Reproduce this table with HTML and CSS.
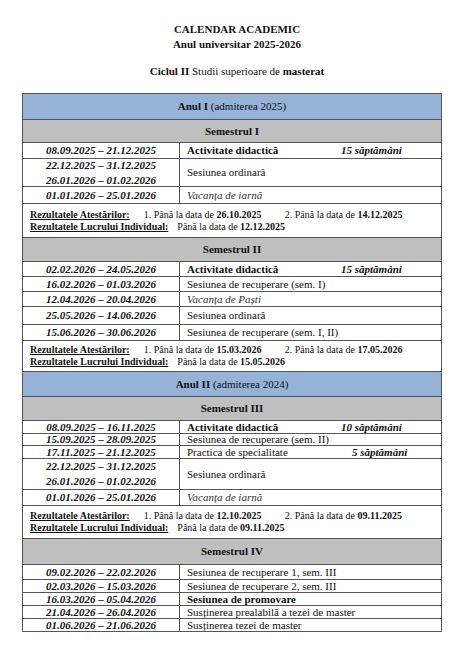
FILE: index.html
```html
<!DOCTYPE html>
<html lang="ro">
<head>
<meta charset="utf-8">
<title>Calendar academic</title>
<link rel="stylesheet" href="styles.css">
</head>
<body>
<div class="page">
  <header class="head">
    <div class="title">CALENDAR ACADEMIC</div>
    <div class="title">Anul universitar 2025-2026</div>
    <div class="cycle"><b>Ciclul II</b> Studii superioare de <b>masterat</b></div>
  </header>

  <table class="cal">
    <colgroup><col class="c1"><col class="c2"></colgroup>
    <tbody>
      <tr class="year h26"><td colspan="2"><b>Anul I</b> (admiterea 2025)</td></tr>
      <tr class="sem h23"><td colspan="2">Semestrul I</td></tr>
      <tr class="h16"><td class="d">08.09.2025 – 21.12.2025</td><td class="t"><div class="wk"><b class="lab">Activitate didactică</b><b class="w"><i>15 săptămâni</i></b></div></td></tr>
      <tr class="h28"><td class="d"><div class="pair"><span>22.12.2025 – 31.12.2025</span><span>26.01.2026 – 01.02.2026</span></div></td><td class="t">Sesiunea ordinară</td></tr>
      <tr class="h17"><td class="d">01.01.2026 – 25.01.2026</td><td class="t vac">Vacanța de iarnă</td></tr>
      <tr class="h34"><td colspan="2" class="rez">
        <div><u class="rl">Rezultatele Atestărilor:</u><span class="a1">1. Până la data de <b>26.10.2025</b></span><span class="a2">2. Până la data de <b>14.12.2025</b></span></div>
        <div><u class="rl">Rezultatele Lucrului Individual:</u><span class="li">Până la data de <b>12.12.2025</b></span></div>
      </td></tr>

      <tr class="sem h24"><td colspan="2">Semestrul II</td></tr>
      <tr class="h15"><td class="d">02.02.2026 – 24.05.2026</td><td class="t"><div class="wk"><b class="lab">Activitate didactică</b><b class="w"><i>15 săptămâni</i></b></div></td></tr>
      <tr class="h15"><td class="d">16.02.2026 – 01.03.2026</td><td class="t">Sesiunea de recuperare (sem. I)</td></tr>
      <tr class="h15"><td class="d">12.04.2026 – 20.04.2026</td><td class="t vac">Vacanța de Paști</td></tr>
      <tr class="h18"><td class="d">25.05.2026 – 14.06.2026</td><td class="t">Sesiunea ordinară</td></tr>
      <tr class="h16"><td class="d">15.06.2026 – 30.06.2026</td><td class="t">Sesiunea de recuperare (sem. I, II)</td></tr>
      <tr class="h31"><td colspan="2" class="rez">
        <div><u class="rl">Rezultatele Atestărilor:</u><span class="a1">1. Până la data de <b>15.03.2026</b></span><span class="a2">2. Până la data de <b>17.05.2026</b></span></div>
        <div><u class="rl">Rezultatele Lucrului Individual:</u><span class="li">Până la data de <b>15.05.2026</b></span></div>
      </td></tr>

      <tr class="year h25"><td colspan="2"><b>Anul II</b> (admiterea 2024)</td></tr>
      <tr class="sem h24"><td colspan="2">Semestrul III</td></tr>
      <tr class="h13"><td class="d">08.09.2025 – 16.11.2025</td><td class="t"><div class="wk"><b class="lab">Activitate didactică</b><b class="w"><i>10 săptămâni</i></b></div></td></tr>
      <tr class="h12"><td class="d">15.09.2025 – 28.09.2025</td><td class="t">Sesiunea de recuperare (sem. II)</td></tr>
      <tr class="h13"><td class="d">17.11.2025 – 21.12.2025</td><td class="t"><div class="wk"><span class="lab lab-long">Practica de specialitate</span><b class="w"><i>5 săptămâni</i></b></div></td></tr>
      <tr class="h31"><td class="d"><div class="pair"><span>22.12.2025 – 31.12.2025</span><span>26.01.2026 – 01.02.2026</span></div></td><td class="t">Sesiunea ordinară</td></tr>
      <tr class="h16"><td class="d">01.01.2026 – 25.01.2026</td><td class="t vac">Vacanța de iarnă</td></tr>
      <tr class="h33"><td colspan="2" class="rez">
        <div><u class="rl">Rezultatele Atestărilor:</u><span class="a1">1. Până la data de <b>12.10.2025</b></span><span class="a2">2. Până la data de <b>09.11.2025</b></span></div>
        <div><u class="rl">Rezultatele Lucrului Individual:</u><span class="li">Până la data de <b>09.11.2025</b></span></div>
      </td></tr>

      <tr class="sem h26"><td colspan="2">Semestrul IV</td></tr>
      <tr class="h15"><td class="d">09.02.2026 – 22.02.2026</td><td class="t">Sesiunea de recuperare 1, sem. III</td></tr>
      <tr class="h13"><td class="d">02.03.2026 – 15.03.2026</td><td class="t">Sesiunea de recuperare 2, sem. III</td></tr>
      <tr class="h13"><td class="d">16.03.2026 – 05.04.2026</td><td class="t"><b>Sesiunea de promovare</b></td></tr>
      <tr class="h13"><td class="d">21.04.2026 – 26.04.2026</td><td class="t">Susținerea prealabilă a tezei de master</td></tr>
      <tr class="h13"><td class="d">01.06.2026 – 21.06.2026</td><td class="t">Susținerea tezei de master</td></tr>
    </tbody>
  </table>
</div>
</body>
</html>
```

FILE: styles.css
```css
html, body {
  margin: 0;
  padding: 0;
  background: #ffffff;
}

body {
  font-family: "Liberation Serif", "Times New Roman", serif;
  color: #111111;
}

.page {
  width: 474px;
  padding-top: 22px;
}

.head {
  text-align: center;
}

.title {
  font-weight: bold;
  font-size: 11px;
  line-height: 15px;
}

.cycle {
  font-size: 11px;
  line-height: 15px;
  margin-top: 12px;
}

.cal {
  margin: 14px 0 0 22px;
  width: 419px;
  border-collapse: collapse;
  table-layout: fixed;
  border: 1px solid #555555;
}

.c1 { width: 157px; }
.c2 { width: 262px; }

.cal td {
  border: 1px solid #555555;
  padding: 0;
  font-size: 11px;
  line-height: 11px;
  vertical-align: middle;
}

.year td {
  background: #95b3d7;
  text-align: center;
}

.sem td {
  background: #bfbfbf;
  text-align: center;
  font-weight: bold;
}

.cal td.d {
  text-align: center;
  font-weight: bold;
  font-style: italic;
  font-size: 11px;
}

.pair {
  display: flex;
  flex-direction: column;
  align-items: center;
  gap: 4px;
}

.cal td.t {
  padding-left: 7px;
}

.cal td.vac {
  font-style: italic;
  color: #333333;
}

.wk {
  display: flex;
}

.lab {
  width: 154px;
  flex: none;
}

.lab-long {
  width: 165px;
}

.cal td.rez {
  padding: 0 7px;
  font-size: 10px;
  line-height: 12px;
}

.rl {
  font-weight: bold;
}

.a1 {
  display: inline-block;
  margin-left: 14px;
  width: 141px;
}

.a2 {
  display: inline-block;
}

.li {
  margin-left: 9px;
}

.h12 { height: 12px; }
.h13 { height: 13px; }
.h15 { height: 15px; }
.h16 { height: 16px; }
.h17 { height: 17px; }
.h18 { height: 18px; }
.h23 { height: 23px; }
.h24 { height: 24px; }
.h25 { height: 25px; }
.h26 { height: 26px; }
.h28 { height: 28px; }
.h31 { height: 31px; }
.h33 { height: 33px; }
.h34 { height: 34px; }
```
